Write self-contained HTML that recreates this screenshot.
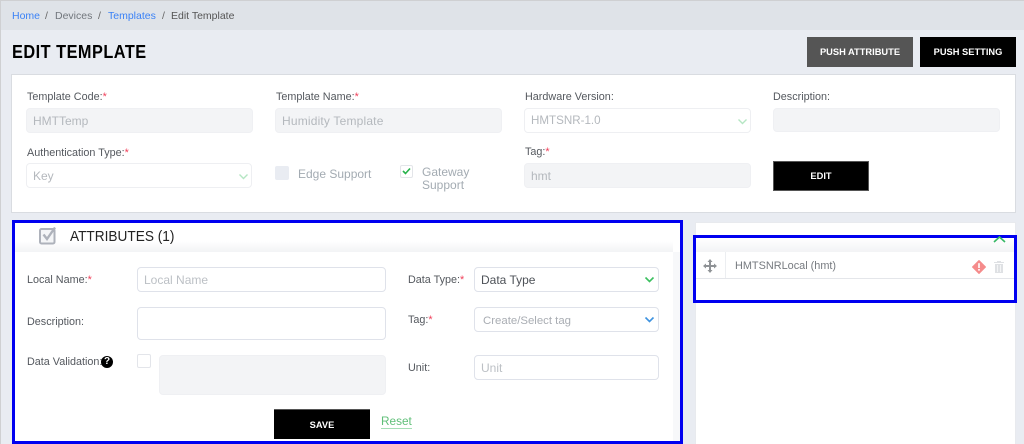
<!DOCTYPE html>
<html><head><meta charset="utf-8"><style>
*{box-sizing:border-box;margin:0;padding:0}
html,body{width:1024px;height:444px;overflow:hidden;background:#e9ecf2;font-family:"Liberation Sans",sans-serif}
#p{position:absolute;left:0;top:0;width:1024px;height:444px;filter:blur(.3px)}
#p div,#p span.a,#p svg{position:absolute}
.t{white-space:nowrap;font-size:10.8px;color:#54585e;line-height:14px}
.t b{color:#f0405a;font-weight:400}
.i{border:1px solid #e4e7ec;border-radius:4px;background:#fff;font-size:12px;color:#b4b8bd;line-height:24px;padding-left:6px;white-space:nowrap}
.d{background:#f3f4f6;border-color:#eff0f3}
.l{border-color:#dfe2ea}
.btn{background:#000;color:#fff;font-weight:700;font-size:9.3px;text-align:center;line-height:30px;white-space:nowrap}
.ph{color:#bcc0c5}
.bc{top:9px;font-size:10.5px;line-height:14px;white-space:nowrap}
</style></head><body><div id="p">
<div style="left:0;top:0;width:1024px;height:1px;background:#cfd0d2"></div>
<div style="left:0;top:0;width:1px;height:444px;background:#cfd0d2"></div>
<div style="left:1px;top:1px;width:1023px;height:29px;background:#dfe3e8"></div>
<div class="bc" style="left:12px;color:#3b82f6">Home</div>
<div class="bc" style="left:45px;color:#666">/</div>
<div class="bc" style="left:55px;color:#71767c">Devices</div>
<div class="bc" style="left:98px;color:#666">/</div>
<div class="bc" style="left:108px;color:#3b82f6">Templates</div>
<div class="bc" style="left:162px;color:#666">/</div>
<div class="bc" style="left:171px;color:#555">Edit Template</div>
<div style="left:12px;top:42px;font-size:18px;font-weight:700;color:#000;line-height:21px;white-space:nowrap;letter-spacing:.55px;transform:scaleX(.905);transform-origin:0 0">EDIT TEMPLATE</div>
<div class="btn" style="left:807px;top:37px;width:106px;height:30px;background:#555">PUSH ATTRIBUTE</div>
<div class="btn" style="left:920px;top:37px;width:96px;height:30px">PUSH SETTING</div>

<div style="left:11px;top:74px;width:1005px;height:139px;background:#fff;border:1px solid #d9dce1"></div>
<div class="t" style="left:27px;top:90px">Template Code:<b>*</b></div>
<div class="i d" style="left:26px;top:108px;width:227px;height:25px">HMTTemp</div>
<div class="t" style="left:276px;top:90px">Template Name:<b>*</b></div>
<div class="i d" style="left:275px;top:108px;width:227px;height:25px;letter-spacing:.18px">Humidity Template</div>
<div class="t" style="left:525px;top:90px">Hardware Version:</div>
<div class="i" style="left:524px;top:108px;width:227px;height:25px;border-color:#eeeff2;font-size:11.6px">HMTSNR-1.0</div>
<svg style="left:737px;top:118px" width="11" height="7" viewBox="0 0 11 7"><path d="M1.5 1.5L5.5 5.5L9.5 1.5" fill="none" stroke="#b5e6c3" stroke-width="1.4"/></svg>
<div class="t" style="left:773px;top:90px">Description:</div>
<div class="i d" style="left:773px;top:108px;width:227px;height:24px"></div>

<div class="t" style="left:27px;top:146px">Authentication Type:<b>*</b></div>
<div class="i" style="left:26px;top:163px;width:226px;height:25px;border-color:#eeeff2">Key</div>
<svg style="left:238px;top:173px" width="11" height="7" viewBox="0 0 11 7"><path d="M1.5 1.5L5.5 5.5L9.5 1.5" fill="none" stroke="#b5e6c3" stroke-width="1.4"/></svg>
<div style="left:275px;top:166px;width:14px;height:14px;background:#e9ecf2;border-radius:2px"></div>
<div class="t" style="left:298px;top:167px;font-size:12px;color:#a3abb2">Edge Support</div>
<div style="left:400px;top:165px;width:13px;height:13px;border:1px solid #e3e5e9;border-radius:2px;background:#fff"></div>
<svg style="left:402px;top:167px" width="9" height="8" viewBox="0 0 9 8"><path d="M1 4L3.5 6.5L8 1.5" fill="none" stroke="#27b24a" stroke-width="1.6"/></svg>
<div class="t" style="left:422px;top:165px;font-size:12px;color:#a3abb2">Gateway</div>
<div class="t" style="left:422px;top:178px;font-size:12px;color:#a3abb2">Support</div>
<div class="t" style="left:525px;top:145px">Tag:<b>*</b></div>
<div class="i d" style="left:524px;top:163px;width:227px;height:25px">hmt</div>
<div class="btn" style="left:773px;top:161px;width:96px;height:30px;border:1px solid #555;line-height:28px">EDIT</div>

<!-- Attributes -->
<div style="left:12px;top:220px;width:671px;height:224px;background:#fff"></div>
<div style="left:15px;top:241px;width:658px;height:11px;background:linear-gradient(#fff,#f2f3f5)"></div>
<div style="left:673px;top:252px;width:7px;height:189px;background:#f7f8fa"></div>
<svg style="left:38px;top:226px" width="19" height="19" viewBox="0 0 19 19"><rect x="2" y="3" width="14.5" height="14.5" rx="1.5" fill="#f4f5f7" stroke="#aeb2bb" stroke-width="2"/><path d="M5.500 8.500L9 13L17 1.500" fill="none" stroke="#aeb2bb" stroke-width="2.400"/></svg>
<div style="left:70px;top:228px;font-size:15px;line-height:18px;color:#222;white-space:nowrap;transform:scaleX(.91);transform-origin:0 0">ATTRIBUTES (1)</div>

<div class="t" style="left:27px;top:273px">Local Name:<b>*</b></div>
<div class="i l ph" style="left:137px;top:267px;width:249px;height:25px">Local Name</div>
<div class="t" style="left:27px;top:315px">Description:</div>
<div class="i l" style="left:137px;top:307px;width:249px;height:33px"></div>
<div class="t" style="left:27px;top:355px">Data Validation:</div>
<div style="left:101px;top:356px;width:12px;height:12px;border-radius:50%;background:#000;color:#fff;font-size:10px;font-weight:700;line-height:12px;text-align:center">?</div>
<div style="left:137px;top:354px;width:14px;height:14px;border:1px solid #e3e5ea;border-radius:2px;background:#fff"></div>
<div class="i d" style="left:159px;top:355px;width:227px;height:40px"></div>

<div class="t" style="left:408px;top:273px">Data Type:<b>*</b></div>
<div class="i l" style="left:474px;top:267px;width:185px;height:25px;color:#4e5258;font-size:12px">Data Type</div>
<svg style="left:644px;top:276px" width="11" height="7" viewBox="0 0 11 7"><path d="M1.5 1.5L5.5 5.5L9.5 1.5" fill="none" stroke="#3cc060" stroke-width="1.6"/></svg>
<div class="t" style="left:408px;top:313px">Tag:<b>*</b></div>
<div class="i l" style="left:474px;top:307px;width:185px;height:25px;color:#a9adb3;padding-left:8px;font-size:11.4px;line-height:26px">Create/Select tag</div>
<svg style="left:644px;top:316px" width="11" height="7" viewBox="0 0 11 7"><path d="M1.5 1.5L5.5 5.5L9.5 1.5" fill="none" stroke="#3f93e0" stroke-width="1.6"/></svg>
<div class="t" style="left:408px;top:361px">Unit:</div>
<div class="i l ph" style="left:474px;top:355px;width:185px;height:25px">Unit</div>

<div class="btn" style="left:274px;top:409px;width:96px;height:30px;border-top:1px solid #555;line-height:30px">SAVE</div>
<div style="left:381px;top:415px;font-size:11.8px;line-height:13px;color:#5fbf78;border-bottom:1px solid #a5dfb5;white-space:nowrap">Reset</div>
<div style="left:12px;top:220px;width:671px;height:224px;border:3px solid #0000f0"></div>

<!-- Right panel -->
<div style="left:695px;top:222px;width:321px;height:222px;background:#fff;border:1px solid #e8eaee;border-bottom:0"></div>
<div style="left:696px;top:238px;width:318px;height:14px;background:linear-gradient(#fff,#f2f3f5)"></div>
<div style="left:696px;top:278px;width:318px;height:1px;background:#e4e6ea"></div>
<div style="left:725px;top:252px;width:1px;height:26px;background:#eceef1"></div>
<svg style="left:703px;top:259px" width="14" height="14" viewBox="0 0 14 14"><path d="M7 0L9.5 3H8V6H11V4.5L14 7L11 9.5V8H8V11H9.5L7 14L4.5 11H6V8H3V9.5L0 7L3 4.5V6H6V3H4.5Z" fill="#8f9296"/></svg>
<div class="t" style="left:735px;top:259px;font-size:10.9px;color:#777b80">HMTSNRLocal (hmt)</div>
<svg style="left:972px;top:260px" width="14" height="14" viewBox="0 0 14 14"><path d="M7 .5L13.5 7L7 13.5L.5 7Z" fill="#f58b8b" stroke="#f58b8b" stroke-linejoin="round"/><rect x="6.2" y="3.2" width="1.6" height="4.8" fill="#fff"/><rect x="6.2" y="9" width="1.6" height="1.7" fill="#fff"/></svg>
<svg style="left:994px;top:261px" width="10" height="12" viewBox="0 0 10 12"><path d="M0 1.5H10M3.5 1.5V.5H6.5V1.5" fill="none" stroke="#dfe1e4"/><path d="M1 3H9V12H1Z" fill="#dfe1e4"/><path d="M3.5 4V11M6.5 4V11" stroke="#f4f5f6"/></svg>
<div style="left:693px;top:235px;width:324px;height:68px;border:3px solid #0000f0"></div>
<svg style="left:992px;top:235px" width="15" height="8" viewBox="0 0 15 8"><path d="M2 7L7.5 2L13 7" fill="none" stroke="#35b864" stroke-width="1.6"/></svg>
</div></body></html>
